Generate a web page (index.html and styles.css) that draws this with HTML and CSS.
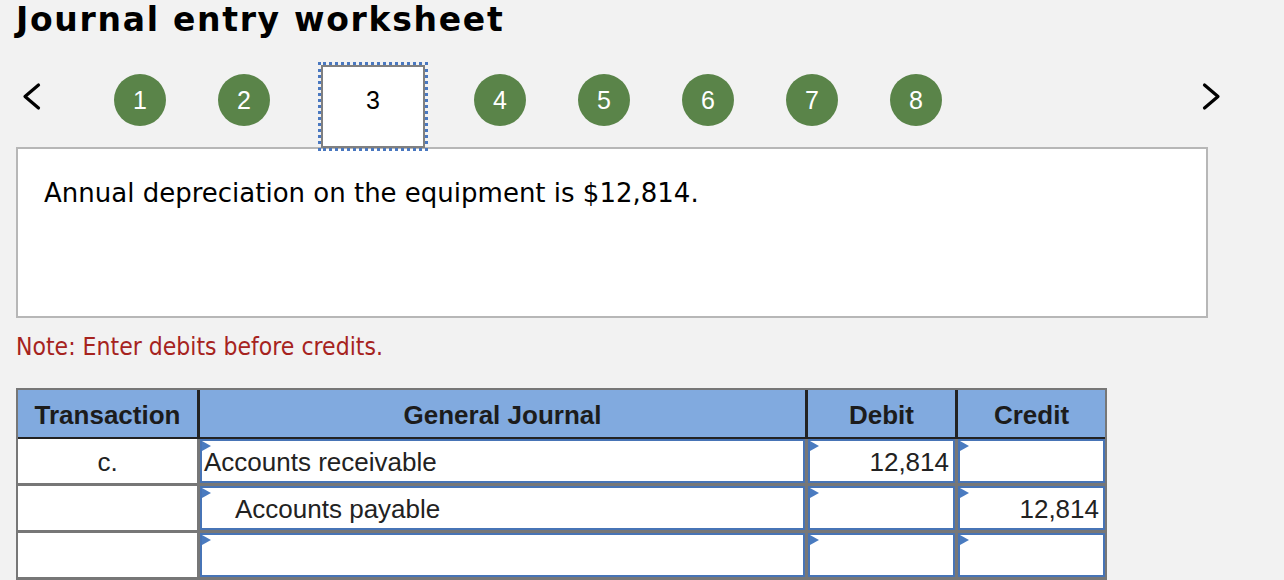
FILE: index.html
```html
<!DOCTYPE html>
<html lang="en">
<head>
  <meta charset="UTF-8">
  <meta name="viewport" content="width=device-width, initial-scale=1.0">
  <title>Journal entry worksheet</title>
  <link rel="stylesheet" href="styles.css">
</head>
<body>
  <h1 class="title">Journal entry worksheet</h1>

  <div class="stepper">
    <svg class="arrow prev" width="20" height="30" viewBox="0 0 20 30">
      <polyline points="16.5,4 3,15.5 16.5,27" fill="none" stroke="#000" stroke-width="3.2" stroke-linecap="round" stroke-linejoin="round"/>
    </svg>
    <div class="steps">
      <span class="step">1</span>
      <span class="step">2</span>
      <span class="step current">3</span>
      <span class="step">4</span>
      <span class="step">5</span>
      <span class="step">6</span>
      <span class="step">7</span>
      <span class="step">8</span>
    </div>
    <svg class="arrow next" width="20" height="30" viewBox="0 0 20 30">
      <polyline points="3.5,4 17,15.5 3.5,27" fill="none" stroke="#000" stroke-width="3.2" stroke-linecap="round" stroke-linejoin="round"/>
    </svg>
  </div>

  <div class="question">Annual depreciation on the equipment is $12,814.</div>

  <p class="note">Note: Enter debits before credits.</p>

  <div class="journal">
    <div class="jrow jhead">
      <div class="hcell">Transaction</div>
      <div class="hcell">General Journal</div>
      <div class="hcell">Debit</div>
      <div class="hcell">Credit</div>
    </div>
    <div class="jrow">
      <div class="cell tx">c.</div>
      <div class="cell"><div class="field">Accounts receivable</div></div>
      <div class="cell"><div class="field num">12,814</div></div>
      <div class="cell"><div class="field num"></div></div>
    </div>
    <div class="jrow">
      <div class="cell tx"></div>
      <div class="cell"><div class="field indent">Accounts payable</div></div>
      <div class="cell"><div class="field num"></div></div>
      <div class="cell"><div class="field num">12,814</div></div>
    </div>
    <div class="jrow">
      <div class="cell tx"></div>
      <div class="cell"><div class="field"></div></div>
      <div class="cell"><div class="field num"></div></div>
      <div class="cell"><div class="field num"></div></div>
    </div>
  </div>
</body>
</html>
```

FILE: styles.css
```css
body {
  margin: 0;
  padding: 0 16px;
  background: #f2f2f2;
  color: #000;
  font-family: "DejaVu Sans", sans-serif;
  overflow: hidden;
}
.title {
  margin: 0;
  font-family: "DejaVu Sans", sans-serif;
  font-weight: bold;
  font-size: 33px;
  line-height: 39px;
  letter-spacing: 1.7px;
  white-space: nowrap;
}
.stepper {
  display: flex;
  align-items: flex-start;
  margin-top: 26px;
  padding-right: 47px;
  height: 83px;
}
.arrow {
  display: block;
  margin-top: 16px;
  flex: none;
}
.prev {
  margin-left: 6px;
  margin-right: 72px;
}
.next {
  margin-left: auto;
}
.steps {
  display: flex;
  align-items: flex-start;
  gap: 52px;
}
.step {
  width: 52px;
  height: 52px;
  margin-top: 9px;
  border-radius: 50%;
  background: #5a8449;
  color: #fff;
  font-family: "Liberation Sans", Arial, sans-serif;
  font-size: 25px;
  display: flex;
  align-items: center;
  justify-content: center;
}
.step.current {
  position: relative;
  z-index: 1;
  box-sizing: border-box;
  width: 104px;
  height: 83px;
  margin: 0 -3px 0 -1px;
  border-radius: 0;
  background: #fff;
  color: #000;
  border: 2px solid #808080;
  outline: 3px dotted #4a78c0;
  padding-bottom: 12px;
}
.question {
  box-sizing: border-box;
  width: 1192px;
  height: 171px;
  margin-top: -1px;
  border: 2px solid #b7b7b7;
  background: #fff;
  padding: 28px 26px 0;
  font-size: 26px;
  line-height: 32px;
}
.note {
  margin: 14px 0 0;
  height: 30px;
  font-family: "DejaVu Sans Condensed", "DejaVu Sans", sans-serif;
  font-size: 24.5px;
  line-height: 30px;
  color: #a6231e;
}
.journal {
  width: 1091px;
  box-sizing: border-box;
  margin-top: 26px;
  border: 2px solid #777;
  border-bottom: none;
  font-family: "Liberation Sans", Arial, sans-serif;
  font-size: 26px;
  color: #222;
}
.jrow {
  display: grid;
  grid-template-columns: 179px 605px 147px 147px;
  column-gap: 3px;
  grid-auto-rows: 44px;
  background: #777;
  padding-bottom: 3px;
}
.jhead {
  grid-auto-rows: 47px;
  background: #222;
  padding-bottom: 2px;
}
.hcell {
  background: #81aadf;
  font-weight: bold;
  color: #1c1c1c;
  display: flex;
  align-items: center;
  justify-content: center;
  padding-top: 3px;
  box-sizing: border-box;
}
.cell {
  background: #fff;
}
.tx {
  display: flex;
  align-items: center;
  justify-content: center;
  padding-top: 3px;
  box-sizing: border-box;
}
.field {
  position: relative;
  box-sizing: border-box;
  height: 100%;
  border: 2px solid #4774b6;
  display: flex;
  align-items: center;
  padding: 3px 4px 0 2px;
  white-space: nowrap;
}
.field::before {
  content: "";
  position: absolute;
  top: 0;
  left: 0;
  border-left: 9px solid #4a7bc0;
  border-top: 5px solid transparent;
  border-bottom: 5px solid transparent;
}
.indent {
  padding-left: 33px;
}
.num {
  justify-content: flex-end;
}
```
